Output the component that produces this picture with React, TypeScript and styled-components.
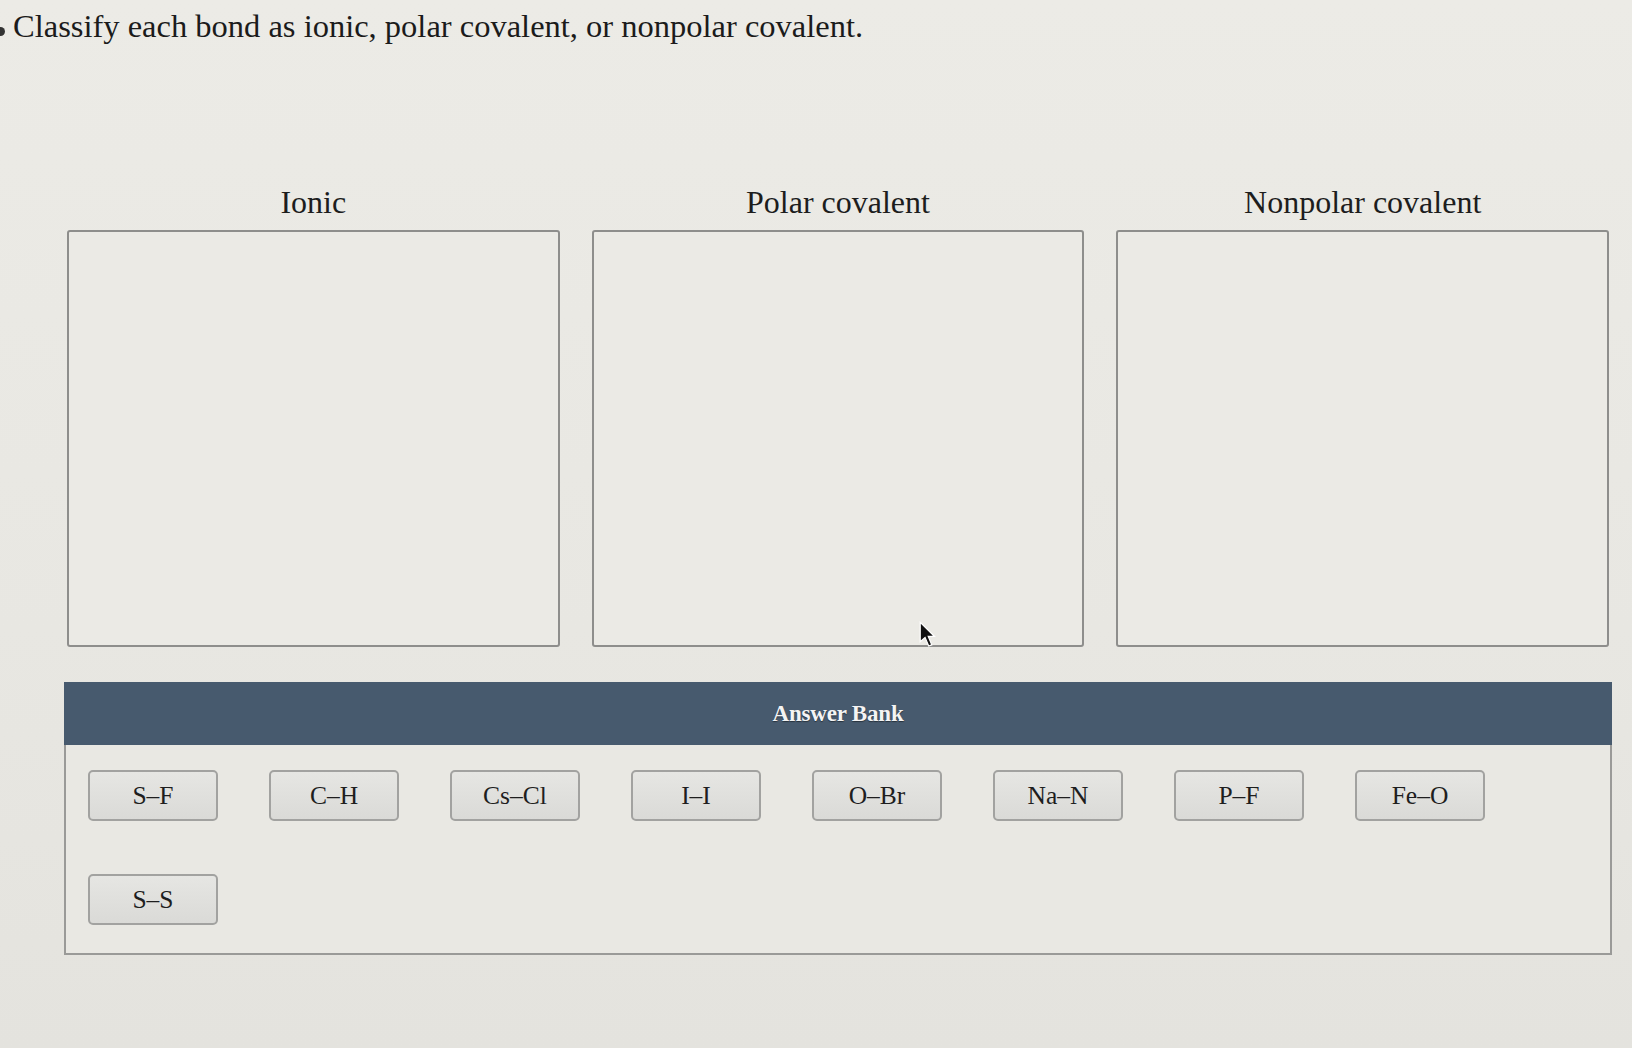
import styled, { createGlobalStyle } from 'styled-components';

const GlobalStyle = createGlobalStyle`
  html, body {
    margin: 0;
    padding: 0;
    background: #e9e8e3;
  }
  body {
    font-family: "Liberation Serif", "Times New Roman", serif;
    color: #1f1f1f;
  }
`;

const categories = ['Ionic', 'Polar covalent', 'Nonpolar covalent'];
const bonds = ['S–F', 'C–H', 'Cs–Cl', 'I–I', 'O–Br', 'Na–N', 'P–F', 'Fe–O', 'S–S'];

const App = () => {
    return (
        <Page>
            <GlobalStyle />
            <Title>Classify each bond as ionic, polar covalent, or nonpolar covalent.</Title>
            <Content>
                <Columns>
                    {categories.map((name) => (
                        <Column key={name}>
                            <ColumnLabel>{name}</ColumnLabel>
                            <DropBox />
                        </Column>
                    ))}
                </Columns>
                <Bank>
                    <BankHeader>Answer Bank</BankHeader>
                    <BankBody>
                        {bonds.map((b) => <Chip key={b}>{b}</Chip>)}
                    </BankBody>
                </Bank>
                <Cursor viewBox="0 0 14 22">
                    <path d="M1 1 L1 17 L5 13.5 L8 20.5 L10.5 19.5 L7.6 12.6 L12.8 12.6 Z" fill="#111" stroke="#fff" strokeWidth="1" />
                </Cursor>
            </Content>
        </Page>
    );
};

export default App;

const Page = styled.div`
  width: 1632px;
  height: 1048px;
  overflow: hidden;
  background: linear-gradient(180deg, #ecebe6 0%, #e8e7e2 60%, #e4e3de 100%);
  box-sizing: border-box;
  padding-top: 7px;
`;

const Title = styled.h1`
  position: relative;
  margin: 0;
  padding-left: 13px;
  font-size: 32.5px;
  line-height: 38px;
  font-weight: 400;
  color: #1b1b1b;

  &::before {
    content: '';
    position: absolute;
    left: -4px;
    top: 20px;
    width: 9px;
    height: 9px;
    border-radius: 50%;
    background: #333;
  }
`;

const Content = styled.div`
  position: relative;
  width: 1548px;
  margin: 139px 0 0 64px;
`;

const Columns = styled.div`
  display: grid;
  grid-template-columns: repeat(3, 1fr);
  column-gap: 32px;
  padding: 0 3px;
`;

const Column = styled.div`
  display: flex;
  flex-direction: column;
  align-items: stretch;
`;

const ColumnLabel = styled.div`
  text-align: center;
  font-size: 32px;
  line-height: 36px;
  margin-bottom: 10px;
  color: #1d1d1d;
`;

const DropBox = styled.div`
  height: 417px;
  border: 2px solid #8e8e8c;
  border-radius: 3px;
  box-sizing: border-box;
  background: #ebeae5;
`;

const Bank = styled.div`
  margin-top: 35px;
  display: flex;
  flex-direction: column;
`;

const BankHeader = styled.div`
  height: 63px;
  display: flex;
  align-items: center;
  justify-content: center;
  background: #475a6e;
  color: #f4f4f4;
  font-size: 23px;
  font-weight: 700;
  letter-spacing: -0.2px;
  text-shadow: 0 1px 1px rgba(0, 0, 0, 0.45);
`;

const BankBody = styled.div`
  display: flex;
  flex-wrap: wrap;
  gap: 53px 51px;
  padding: 25px 20px 28px 22px;
  border: 2px solid #9a9a98;
  border-top: none;
  background: #e9e8e3;
`;

const Chip = styled.div`
  width: 130px;
  height: 51px;
  box-sizing: border-box;
  display: flex;
  align-items: center;
  justify-content: center;
  border: 2px solid #a2a2a0;
  border-radius: 5px;
  background: linear-gradient(180deg, #e6e6e3 0%, #dadad7 100%);
  font-size: 25.5px;
  color: #1e1e1e;
`;

const Cursor = styled.svg`
  position: absolute;
  left: 855px;
  top: 437px;
  width: 17px;
  height: 27px;
`;
